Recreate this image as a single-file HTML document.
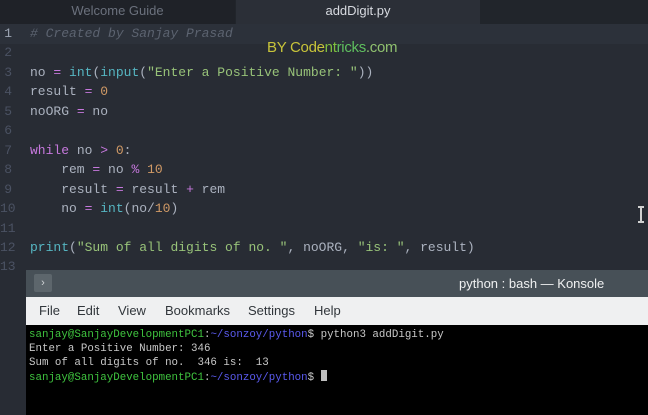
<!DOCTYPE html>
<html><head><style>
*{margin:0;padding:0;box-sizing:border-box}
body{width:648px;height:415px;overflow:hidden;background:#282c34;position:relative;font-family:"Liberation Mono",monospace}
.tabs{position:absolute;left:0;top:0;width:648px;height:25px;background:#21252b}
.tab{position:absolute;top:0;height:25px;line-height:22px;text-align:center;font-family:"Liberation Sans",sans-serif;font-size:13px}
.t1{left:0;width:235px;color:#6b717d;background:#1f2228}
.t2{left:236px;width:244px;color:#d7dae0;background:#2b2f37}
.hl{position:absolute;left:0;top:24px;width:648px;height:20px;background:#2c313a}
.code{position:absolute;left:0;top:24px;font-size:13px;line-height:19.45px;color:#abb2bf}
.ln{position:absolute;left:0;width:12px;color:#4b5263;text-align:right}
.l{position:absolute;left:30px;white-space:pre}
.c{color:#5c6370;font-style:italic}.b{color:#56b6c2}.s{color:#98c379}.n{color:#d19a66}.o{color:#c678dd}.k{color:#c678dd}
.wm{position:absolute;left:267px;top:39px;font-family:"Liberation Sans",sans-serif;font-size:15px;color:#c8c43a;letter-spacing:-0.3px}
.kon{position:absolute;left:26px;top:270px;width:622px;height:145px}
.tb{height:27px;background:#475057;position:relative}
.tb .ic{position:absolute;left:8px;top:4px;width:18px;height:18px;background:#5d666c;border-radius:2px;color:#cfd3d5;font-size:11px;line-height:18px;text-align:center;font-family:"Liberation Sans",sans-serif}
.tb .tt{position:absolute;left:433px;top:6px;color:#eff0f1;font-family:"Liberation Sans",sans-serif;font-size:13px}
.mb{height:28px;background:#eff0f1;font-family:"Liberation Sans",sans-serif;font-size:13px;color:#31363b;line-height:28px;position:relative}
.mb span{position:absolute;top:0}
.term{height:90px;background:#000;padding:3px 0 0 3px;font-size:10.8px;line-height:14px;color:#c8c8c8;white-space:pre}
.g{color:#3fc43f}.bl{color:#5b5bf0}
.cur{display:inline-block;width:6px;height:11px;background:#c0c0c0;vertical-align:-1px}
</style></head><body>
<div class="tabs"><div class="tab t1">Welcome Guide</div><div class="tab t2">addDigit.py</div></div>
<div class="hl"></div>
<div class="code">
<div class="ln" style="top:0;color:#9da5b4">1</div><div class="ln" style="top:19.45px">2</div><div class="ln" style="top:38.9px">3</div><div class="ln" style="top:58.35px">4</div><div class="ln" style="top:77.8px">5</div><div class="ln" style="top:97.25px">6</div><div class="ln" style="top:116.7px">7</div><div class="ln" style="top:136.15px">8</div><div class="ln" style="top:155.6px">9</div><div class="ln" style="top:175.05px">10</div><div class="ln" style="top:194.5px">11</div><div class="ln" style="top:213.95px">12</div><div class="ln" style="top:233.4px">13</div>
<div class="l c" style="top:0"># Created by Sanjay Prasad</div>
<div class="l" style="top:38.9px">no <span class="o">=</span> <span class="b">int</span>(<span class="b">input</span>(<span class="s">"Enter a Positive Number: "</span>))</div>
<div class="l" style="top:58.35px">result <span class="o">=</span> <span class="n">0</span></div>
<div class="l" style="top:77.8px">noORG <span class="o">=</span> no</div>
<div class="l" style="top:116.7px"><span class="k">while</span> no <span class="o">&gt;</span> <span class="n">0</span>:</div>
<div class="l" style="top:136.15px">    rem <span class="o">=</span> no <span class="o">%</span> <span class="n">10</span></div>
<div class="l" style="top:155.6px">    result <span class="o">=</span> result <span class="o">+</span> rem</div>
<div class="l" style="top:175.05px">    no <span class="o">=</span> <span class="b">int</span>(no/<span class="n">10</span>)</div>
<div class="l" style="top:213.95px"><span class="b">print</span>(<span class="s">"Sum of all digits of no. "</span>, noORG, <span class="s">"is: "</span>, result)</div>
</div>
<div class="wm">BY Code<span style="color:#7fbf3f">nt</span><span style="color:#5fbf5f">ricks</span><span style="color:#8fc06f">.com</span></div>
<div style="position:absolute;left:638px;top:206px;width:6px;height:17px;border:2px solid #d0d0d0;border-left:none;border-right:none"><div style="position:absolute;left:2px;top:0;width:2px;height:13px;background:#d0d0d0"></div></div>
<div class="kon">
<div class="tb"><div class="ic">›</div><div class="tt">python : bash — Konsole</div></div>
<div class="mb"><span style="left:13px">File</span><span style="left:51px">Edit</span><span style="left:92px">View</span><span style="left:139px">Bookmarks</span><span style="left:222px">Settings</span><span style="left:288px">Help</span></div>
<div class="term"><span class="g">sanjay@SanjayDevelopmentPC1</span>:<span class="bl">~/sonzoy/python</span>$ python3 addDigit.py
Enter a Positive Number: 346
Sum of all digits of no.  346 is:  13
<span class="g">sanjay@SanjayDevelopmentPC1</span>:<span class="bl">~/sonzoy/python</span>$ <span class="cur"></span></div>
</div>
</body></html>
